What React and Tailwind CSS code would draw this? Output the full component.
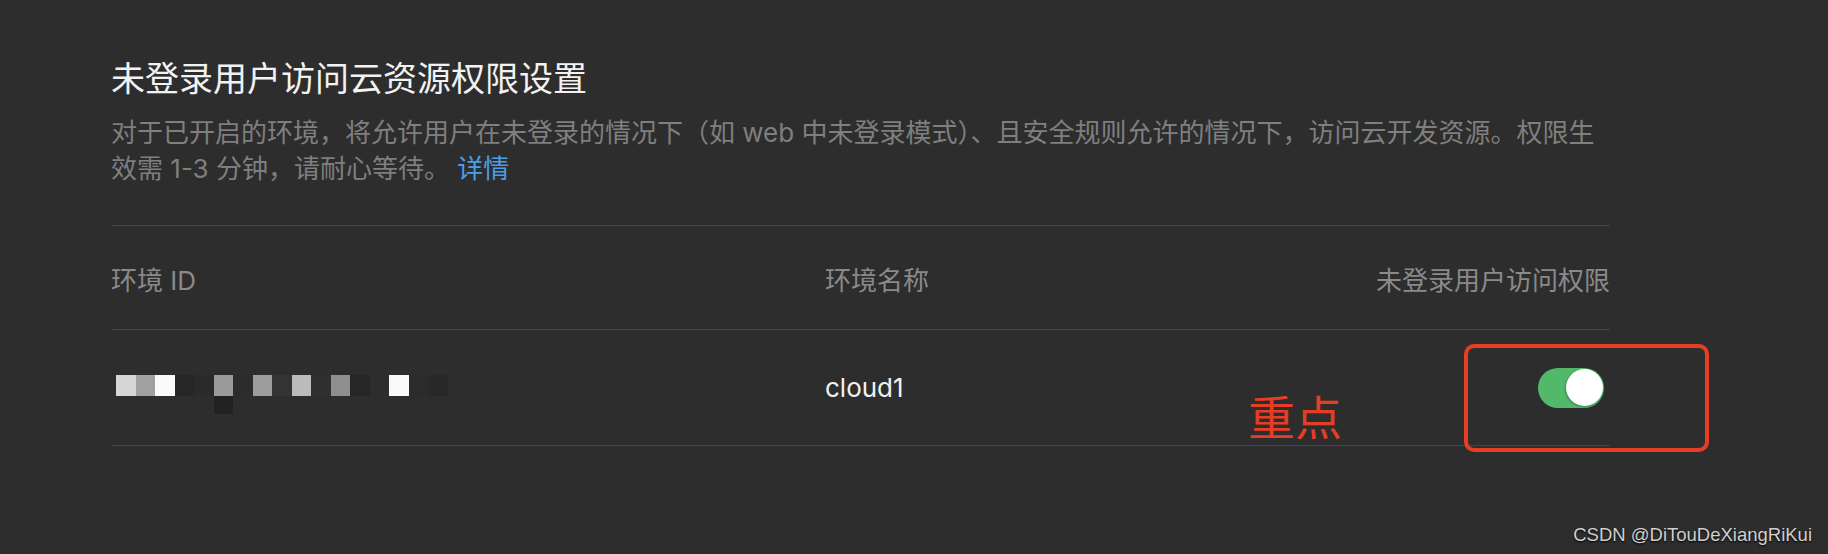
import React from "react";

const mosaic = [
  "#d6d6d6", "#a0a0a0", "#fafafa", "#262626", "#2a2a2a", "#9a9a9a", "#2c2c2c",
  "#9d9d9d", "#333333", "#bbbbbb", "#2f2f2f", "#8e8e8e", "#262626", "#2d2d2d",
  "#fafafa", "#2b2b2b", "#282828",
];

const Toggle = () => (
  <div className="w-[66px] h-[40px] rounded-full bg-[#52b96a] flex items-center justify-end pr-[1px]">
    <div className="w-[37px] h-[37px] rounded-full bg-white shadow-[-1px_1px_2px_rgba(0,0,0,0.25)]"></div>
  </div>
);

const App = () => {
  return (
    <div
      className="relative w-full h-[554px] bg-[#2d2d2d] overflow-hidden"
      style={{ fontFamily: 'Inter, "Noto Sans CJK SC", sans-serif' }}
    >
      <div className="ml-[111px] w-[1499px] pt-[55px]">
        <h1 className="text-[34px] leading-[48px] text-[#f2f2f2] font-normal">
          未登录用户访问云资源权限设置
        </h1>
        <p className="mt-[12px] text-[26px] leading-[36px] text-[#7f7f7f] whitespace-nowrap">
          对于已开启的环境，将允许用户在未登录的情况下（如 web 中未登录模式）、且安全规则允许的情况下，访问云开发资源。权限生
          <br />
          效需 1-3 分钟，请耐心等待。 <span className="text-[#4a9ee8]">详情</span>
        </p>

        <div className="mt-[38px] border-t border-[#444444]">
          <div className="grid grid-cols-[714px_1fr_auto] h-[104px] pt-[5px] items-center border-b border-[#444444] text-[26px] text-[#8a8a8a]">
            <div>环境 ID</div>
            <div>环境名称</div>
            <div className="text-right">未登录用户访问权限</div>
          </div>
          <div className="grid grid-cols-[714px_1fr_auto] h-[116px] border-b border-[#444444]">
            <div className="pt-[45px] pl-[5px]">
              <div className="flex">
                {mosaic.map((c, i) => (
                  <div key={i} className="w-[19.5px] h-[21px]" style={{ backgroundColor: c }}></div>
                ))}
              </div>
              <div className="flex">
                <div className="w-[97.5px] h-[18px]"></div>
                <div className="w-[19.5px] h-[18px] bg-[#222222]"></div>
              </div>
            </div>
            <div className="flex items-center text-[26px] text-[#f0f0f0]">cloud1</div>
            <div className="flex items-center justify-end pr-[6px]">
              <Toggle />
            </div>
          </div>
        </div>
      </div>

      {/* annotation */}
      <div className="absolute left-[1464px] top-[344px] w-[245px] h-[108px] border-4 border-[#e53e25] rounded-[10px]"></div>
      <div className="absolute left-[1248px] top-[394px] text-[47px] leading-none text-[#e53e25]">重点</div>

      <div
        className="absolute right-[16px] bottom-[9px] text-[18.5px] leading-[20px] text-[#cfcfcf] [text-shadow:0_1px_2px_#000]"
        style={{ fontFamily: '"Liberation Sans", sans-serif' }}
      >
        CSDN @DiTouDeXiangRiKui
      </div>
    </div>
  );
};

export default App;
